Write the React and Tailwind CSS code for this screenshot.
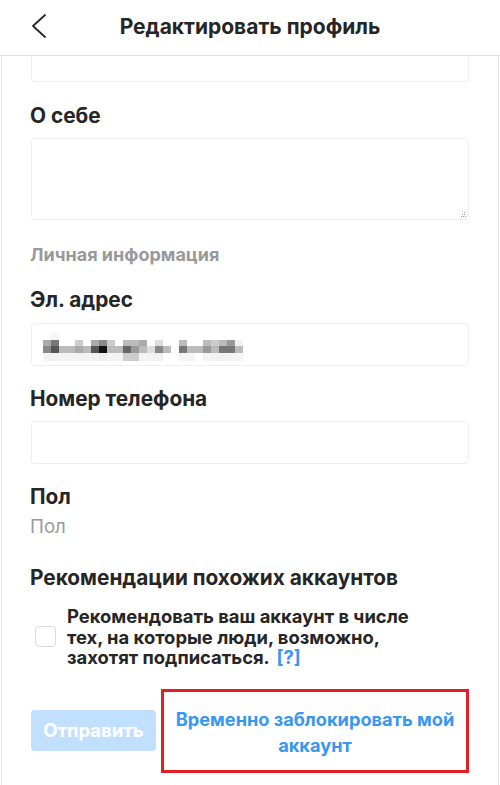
import React from "react";

const row1 = ["#aaa","#777",null,null,"#ccc",null,"#aaa","#888","#ccc",null,"#bbb","#bbb","#aaa",null,"#ddd",null,null,"#bbb",null,null,"#bbb","#ccc","#bbb","#999","#f2f2f2"];
const row2 = ["#888","#555","#bbb","#bbb","#aaa","#bbb","#555","#111","#bbb","#bbb","#666","#999","#bbb","#ddd","#888","#bbb",null,"#777","#bbb","#bbb","#999","#bbb","#777","#777","#bbb"];
const row3 = ["#f2f2f2","#f2f2f2","#f4f4f4","#f4f4f4","#f2f2f2","#f4f4f4","#f2f2f2","#eee","#f4f4f4","#f4f4f4","#ccc","#ccc","#f4f4f4","#f2f2f2","#f2f2f2",null,null,"#f4f4f4","#f4f4f4",null,"#f4f4f4","#f2f2f2","#f2f2f2","#f4f4f4","#f4f4f4"];

function Blur() {
  return (
    <svg width="200" height="28" viewBox="0 0 200 28">
      <rect x="8" y="0" width="8" height="7" fill="#f6f6f6" />
      {row1.map((c, i) => c && <rect key={"a" + i} x={i * 8} y="7" width="8" height="6" fill={c} />)}
      {row2.map((c, i) => c && <rect key={"b" + i} x={i * 8} y="13" width="8" height="7" fill={c} />)}
      {row3.map((c, i) => c && <rect key={"c" + i} x={i * 8} y="20" width="8" height="8" fill={c} />)}
    </svg>
  );
}

export default function App() {
  return (
    <div className="w-[500px] h-[785px] bg-white overflow-hidden text-[#262626]" style={{ fontFamily: "Inter, Roboto, sans-serif" }}>
      <header className="h-[56px] border-b border-[#dbdbdb] flex items-center justify-center relative">
        <svg className="absolute left-[30px] top-[13px]" width="18" height="26" viewBox="0 0 18 26" fill="none">
          <polyline points="15,2 3,13 15,24" stroke="#262626" strokeWidth="1.8" strokeLinecap="round" strokeLinejoin="round" />
        </svg>
        <h1 className="text-[21px] font-bold leading-none mt-[-2px]">Редактировать профиль</h1>
      </header>
      <div className="mx-px border-x border-[#e6e6e6] h-[729px] px-[29px]">
        <div className="h-[26px] border border-t-0 border-[#efefef] rounded-b-[4px]" />

        <div className="mt-[22px] -ml-[1px] text-[20.8px] font-bold leading-[24px]">О себе</div>
        <div className="mt-[10px] h-[82px] border border-[#efefef] rounded-[4px] relative">
          <svg className="absolute right-[2px] bottom-[2px]" width="5" height="5" viewBox="0 0 5 5">
            <rect x="3" y="0" width="1" height="1" fill="#999" />
            <rect x="1" y="2" width="1" height="1" fill="#999" />
            <rect x="3" y="2" width="1" height="1" fill="#999" />
            <rect x="0" y="4" width="1" height="1" fill="#999" />
            <rect x="2" y="4" width="1" height="1" fill="#999" />
            <rect x="4" y="4" width="1" height="1" fill="#999" />
          </svg>
        </div>

        <div className="mt-[24px] -ml-[1px] text-[18px] font-bold leading-[22px] text-[#999999]">Личная информация</div>

        <div className="mt-[22px] -ml-[1px] text-[20.8px] font-bold leading-[24px]">Эл. адрес</div>
        <div className="mt-[11px] h-[43px] border border-[#efefef] rounded-[4px] flex items-center pl-[11px] pt-[4px]">
          <Blur />
        </div>

        <div className="mt-[21px] -ml-[1px] text-[20.8px] font-bold leading-[24px]">Номер телефона</div>
        <div className="mt-[10px] h-[43px] border border-[#efefef] rounded-[4px]" />

        <div className="mt-[21px] -ml-[1px] text-[20.8px] font-bold leading-[24px]">Пол</div>
        <div className="mt-[7px] -ml-[1px] text-[18.7px] leading-[22px] text-[#999999]">Пол</div>

        <div className="mt-[28px] -ml-[1px] text-[20.8px] font-bold leading-[24px]">Рекомендации похожих аккаунтов</div>

        <div className="mt-[16px] flex items-center">
          <div className="ml-[4px] w-[21px] h-[21px] border border-[#dbdbdb] rounded-[4px] shrink-0" />
          <div className="ml-[11px] text-[18.4px] font-bold leading-[20.5px] whitespace-nowrap">
            Рекомендовать ваш аккаунт в числе<br />
            тех, на которые люди, возможно,<br />
            захотят подписаться.{" "}
            <span className="text-[#3897f0] ml-[3px]">[?]</span>
          </div>
        </div>

        <div className="mt-[21px] flex items-center">
          <button className="w-[125px] h-[41px] rounded-[4px] bg-[#c1e0fd] text-white text-[18.5px] font-bold">Отправить</button>
          <div className="ml-[5px] w-[308px] h-[84px] border-[3px] border-[#e41e26] flex items-center justify-center pt-[2px]">
            <span className="text-[#3897f0] text-[18.2px] font-bold leading-[26px] text-center whitespace-nowrap">
              Временно заблокировать мой<br />аккаунт
            </span>
          </div>
        </div>
      </div>
    </div>
  );
}
